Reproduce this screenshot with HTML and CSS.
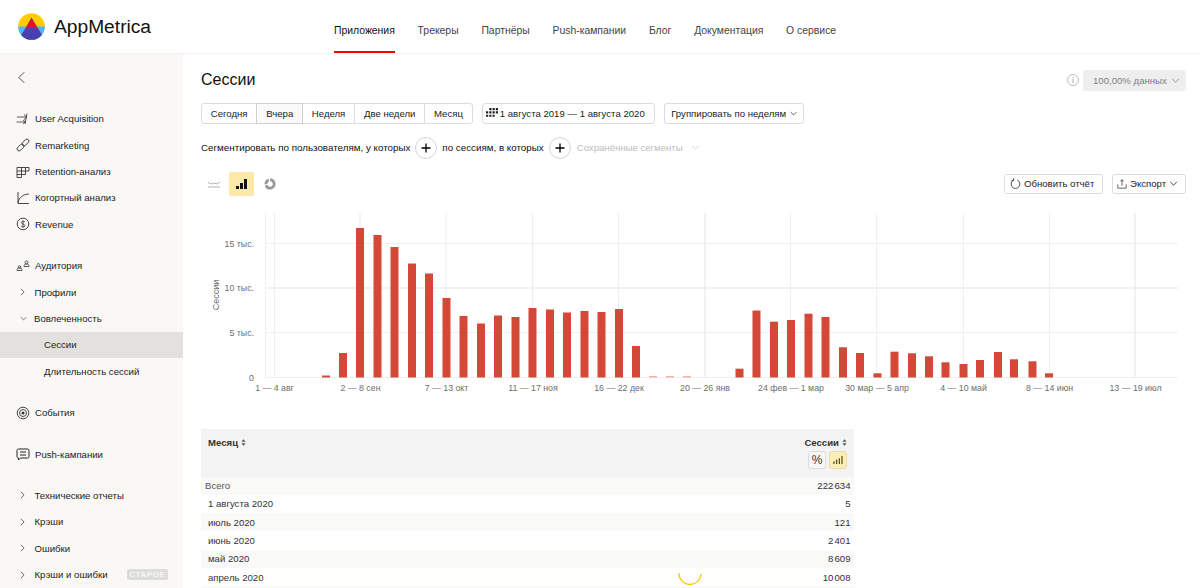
FILE: index.html
```html
<!DOCTYPE html>
<html lang="ru">
<head>
<meta charset="utf-8">
<title>AppMetrica — Сессии</title>
<link rel="stylesheet" href="styles.css">
</head>
<body>
<svg class="defs" width="0" height="0" aria-hidden="true">
  <symbol id="chev-d" viewBox="0 0 10 6"><path d="M1 1l4 4 4-4" fill="none" stroke="currentColor" stroke-width="1"/></symbol>
  <symbol id="chev-r" viewBox="0 0 6 10"><path d="M1 1l4 4-4 4" fill="none" stroke="currentColor" stroke-width="1"/></symbol>
  <symbol id="sort" viewBox="0 0 6 8"><path d="M3 0l2.500 3h-5zM3 8l2.500-3h-5z" fill="currentColor"/></symbol>
  <symbol id="plus" viewBox="0 0 22 22"><circle cx="11" cy="11" r="10.500" fill="#fff" stroke="#d6d6d6"/><path d="M6.500 11h9M11 6.500v9" stroke="#000" stroke-width="1.300" fill="none"/></symbol>
</svg>

<header class="top">
  <a class="brand">
    <svg class="logo" viewBox="0 0 27 27" width="27" height="27">
      <defs><clipPath id="lc"><circle cx="13.500" cy="13.500" r="13.300"/></clipPath></defs>
      <g clip-path="url(#lc)">
        <rect width="27" height="27" fill="#fc0"/>
        <rect y="13.500" width="27" height="14" fill="#4fb5f5"/>
        <path d="M13.500 4.500L27 27H0L7 16z" fill="#4a3fb0"/>
        <path d="M13.500 5L20 16.500Q13.500 12 7 16.500z" fill="#e8112d"/>
      </g>
    </svg>
    <span class="brand-name">AppMetrica</span>
  </a>
  <nav class="nav">
    <a class="nav-item nav-on">Приложения</a>
    <a class="nav-item">Трекеры</a>
    <a class="nav-item">Партнёры</a>
    <a class="nav-item">Push-кампании</a>
    <a class="nav-item">Блог</a>
    <a class="nav-item">Документация</a>
    <a class="nav-item">О сервисе</a>
  </nav>
</header>

<div class="body">
  <aside class="side">
    <svg class="back" viewBox="0 0 8 14" width="7" height="13"><path d="M7 1L1 7l6 6" fill="none" stroke="#333" stroke-width="1"/></svg>

    <ul class="group">
      <li class="item"><svg class="ico" viewBox="0 0 14 14"><path d="M1 5h10M8 2.500L11 5 8 7.500M0.500 10h9M7 8l2.500 2L7 12M11 1.500L9 12" fill="none" stroke="#333" stroke-width=".8"/></svg>User Acquisition</li>
      <li class="item"><svg class="ico" viewBox="0 0 14 14"><g transform="rotate(-45 7 7)" fill="none" stroke="#333" stroke-width=".9"><rect x="-.5" y="5" width="8" height="4" rx="2"/><rect x="6.500" y="5" width="8" height="4" rx="2"/></g></svg>Remarketing</li>
      <li class="item"><svg class="ico" viewBox="0 0 14 14"><path d="M1 2.500h12v3.500H9.500v3.500H5.500V12.500H1zM1 6h8.500M1 9.500h4.500M5.500 2.500V9.500M9.500 2.500V6" fill="none" stroke="#333" stroke-width=".9"/></svg>Retention-анализ</li>
      <li class="item"><svg class="ico" viewBox="0 0 14 14"><path d="M2 1v11.500h11M2 12C3 6 7 3.500 13 3" fill="none" stroke="#333" stroke-width=".9"/></svg>Когортный анализ</li>
      <li class="item"><svg class="ico" viewBox="0 0 14 14"><circle cx="7" cy="7" r="5.800" fill="none" stroke="#333" stroke-width=".9"/><path d="M9 5c-.5-1-3.700-1.200-3.700.5S9 7 9 8.700 5.500 10.200 5 9M7 3.500v7" fill="none" stroke="#333" stroke-width=".8"/></svg>Revenue</li>
    </ul>

    <ul class="group">
      <li class="item"><svg class="ico" viewBox="0 0 14 14"><path d="M1 11.500c0-2 1-2.500 2.500-2.500s2.500.5 2.500 2.500zM8 7.500c0-2 1-2.500 2.500-2.500S13 5.500 13 7.500z" fill="none" stroke="#333" stroke-width=".8"/><circle cx="3.500" cy="8" r="1.300" fill="none" stroke="#333" stroke-width=".8"/><circle cx="10.500" cy="3.500" r="1.500" fill="none" stroke="#333" stroke-width=".8"/></svg>Аудитория</li>
      <li class="item"><svg class="arrow" width="5" height="8"><use href="#chev-r"/></svg>Профили</li>
      <li class="item"><svg class="arrow arrow-d" width="7" height="5"><use href="#chev-d"/></svg>Вовлеченность</li>
      <li class="item sub sub-on">Сессии</li>
      <li class="item sub">Длительность сессий</li>
    </ul>

    <ul class="group group-tight">
      <li class="item"><svg class="ico" viewBox="0 0 14 14"><circle cx="7" cy="7" r="5.800" fill="none" stroke="#333" stroke-width=".9"/><circle cx="7" cy="7" r="3.500" fill="none" stroke="#333" stroke-width=".9"/><circle cx="7" cy="7" r="1.500" fill="#333"/></svg>События</li>
    </ul>

    <ul class="group group-tight">
      <li class="item"><svg class="ico" viewBox="0 0 14 14"><path d="M2.500 2h9a1.500 1.500 0 0 1 1.500 1.500v6a1.500 1.500 0 0 1-1.500 1.500H4.500L2.500 13v-2A1.500 1.500 0 0 1 1 9.500v-6A1.500 1.500 0 0 1 2.500 2zM4 5h6M4 8h6" fill="none" stroke="#222" stroke-width="1"/></svg>Push-кампании</li>
    </ul>

    <ul class="group">
      <li class="item"><svg class="arrow" width="5" height="8"><use href="#chev-r"/></svg>Технические отчеты</li>
      <li class="item"><svg class="arrow" width="5" height="8"><use href="#chev-r"/></svg>Крэши</li>
      <li class="item"><svg class="arrow" width="5" height="8"><use href="#chev-r"/></svg>Ошибки</li>
      <li class="item"><svg class="arrow" width="5" height="8"><use href="#chev-r"/></svg>Крэши и ошибки<span class="old">СТАРОЕ</span></li>
    </ul>
  </aside>

  <main class="main">
    <div class="title-row">
      <h1 class="title">Сессии</h1>
      <div class="sample">
        <svg class="info" viewBox="0 0 12 12" width="12" height="12"><circle cx="6" cy="6" r="5.500" fill="none" stroke="#bbb"/><path d="M6 5v4M6 3v1.200" stroke="#aaa" stroke-width="1"/></svg>
        <span class="sample-btn">100,00% данных<svg class="caret" width="9" height="5"><use href="#chev-d"/></svg></span>
      </div>
    </div>

    <div class="filters">
      <div class="tabs">
        <span class="tab">Сегодня</span><span class="tab tab-on">Вчера</span><span class="tab">Неделя</span><span class="tab">Две недели</span><span class="tab">Месяц</span>
      </div>
      <span class="btn btn-date"><svg class="cal" viewBox="0 0 11 9" width="12" height="10"><path d="M3 0h2v2H3zM6 0h2v2H6zM9 0h2v2H9zM0 3h2v2H0zM3 3h2v2H3zM6 3h2v2H6zM9 3h2v2H9zM0 6h2v2H0zM3 6h2v2H3zM6 6h2v2H6z" fill="#222"/></svg>1 августа 2019 — 1 августа 2020</span>
      <span class="btn btn-group">Группировать по неделям<svg class="caret caret-dark" width="9" height="5"><use href="#chev-d"/></svg></span>
    </div>

    <div class="segments">
      <span class="seg-text">Сегментировать по пользователям, у которых</span>
      <svg class="plus" width="22" height="22"><use href="#plus"/></svg>
      <span class="seg-text">по сессиям, в которых</span>
      <svg class="plus" width="22" height="22"><use href="#plus"/></svg>
      <span class="saved">Сохранённые сегменты<svg class="caret caret-pale" width="9" height="5"><use href="#chev-d"/></svg></span>
    </div>

    <div class="chart-tools">
      <div class="types">
        <span class="type"><svg viewBox="0 0 12 8" width="12" height="8"><path d="M0 2.500l3.500 1.500L6 3l3 1 3-2M0 7h12" fill="none" stroke="#aaa" stroke-width=".9"/></svg></span>
        <span class="type type-on"><svg viewBox="0 0 11 10" width="11" height="10"><path d="M0 7h3v3H0zM4 4h3v6H4zM8 0h3v10H8z" fill="#111"/></svg></span>
        <span class="type"><svg viewBox="0 0 12 12" width="12" height="12"><path d="M6 0.500a5.500 5.500 0 1 1-5.200 7.200l2.700-.9A2.700 2.700 0 1 0 6 3.300z" fill="#999"/><path d="M.6 6.500A5.500 5.500 0 0 1 4.500.7l.6 2.700A2.700 2.700 0 0 0 3.300 6z" fill="#999"/></svg></span>
      </div>
      <div class="actions">
        <span class="btn btn-refresh"><svg class="act-ico" viewBox="0 0 12 12" width="11" height="11"><path d="M4 2.200A4.800 4.800 0 1 0 8 2.200M4 .2v2.500H1.700" fill="none" stroke="#333" stroke-width=".9"/></svg>Обновить отчёт</span>
        <span class="btn btn-export"><svg class="act-ico" viewBox="0 0 12 12" width="10" height="12"><path d="M6 8V1M3.800 3L6 .8 8.200 3M1 6.500V11h10V6.500" fill="none" stroke="#333" stroke-width=".9"/></svg>Экспорт<svg class="caret caret-dark" width="9" height="5"><use href="#chev-d"/></svg></span>
      </div>
    </div>

    <svg class="chart" viewBox="201 205 985 195" width="985" height="195">
      <g class="grid">
        <path d="M265 243.500H1178M265 332.500H1178M265 377.500H1178"/>
        <path class="grid-bold" d="M265 288H1178"/>
        <path d="M265.500 213V378M274.500 213V378M446 213V378M618.500 213V378M790.500 213V378M876.500 213V378M963.500 213V378M1049.500 213V378"/>
        <path class="grid-bold" d="M360 213V378M532.500 213V378M705 213V378M1135 213V378"/>
      </g>
      <g class="bars">
        <rect x="322" y="375.500" width="8" height="2"/>
        <rect x="339" y="353" width="8" height="24.500"/>
        <rect x="356" y="228" width="8" height="149.500"/>
        <rect x="373.500" y="235" width="8" height="142.500"/>
        <rect x="390.500" y="247" width="8" height="130.500"/>
        <rect x="408" y="263.500" width="8" height="114"/>
        <rect x="425" y="273.500" width="8" height="104"/>
        <rect x="442.500" y="298" width="8" height="79.500"/>
        <rect x="459.500" y="316" width="8" height="61.500"/>
        <rect x="477" y="323.500" width="8" height="54"/>
        <rect x="494" y="315.500" width="8" height="62"/>
        <rect x="511.500" y="317" width="8" height="60.500"/>
        <rect x="528.500" y="308" width="8" height="69.500"/>
        <rect x="546" y="309.500" width="8" height="68"/>
        <rect x="563" y="312.500" width="8" height="65"/>
        <rect x="580.500" y="311" width="8" height="66.500"/>
        <rect x="597.500" y="312" width="8" height="65.500"/>
        <rect x="615" y="309" width="8" height="68.500"/>
        <rect x="632" y="346" width="8" height="31.500"/>
        <rect class="bar-pale" x="649" y="376" width="8" height="1.500"/>
        <rect class="bar-pale" x="666" y="376" width="8" height="1.500"/>
        <rect class="bar-pale" x="683" y="376" width="8" height="1.500"/>
        <rect x="735.500" y="368.700" width="8" height="8.800"/>
        <rect x="752.500" y="310.500" width="8" height="67"/>
        <rect x="770" y="321.700" width="8" height="55.800"/>
        <rect x="787" y="320" width="8" height="57.500"/>
        <rect x="804.500" y="313.700" width="8" height="63.800"/>
        <rect x="821.500" y="317" width="8" height="60.500"/>
        <rect x="839" y="347.300" width="8" height="30.200"/>
        <rect x="856" y="353" width="8" height="24.500"/>
        <rect x="873.500" y="373.300" width="8" height="4.200"/>
        <rect x="890.500" y="351.700" width="8" height="25.800"/>
        <rect x="908" y="353.300" width="8" height="24.200"/>
        <rect x="925" y="356.300" width="8" height="21.200"/>
        <rect x="941.500" y="362.300" width="8" height="15.200"/>
        <rect x="959.500" y="364" width="8" height="13.500"/>
        <rect x="976" y="360" width="8" height="17.500"/>
        <rect x="994" y="352" width="8" height="25.500"/>
        <rect x="1010" y="359.300" width="8" height="18.200"/>
        <rect x="1028.500" y="361.300" width="8" height="16.200"/>
        <rect x="1045" y="373.300" width="8" height="4.200"/>
      </g>
      <g class="y-labels">
        <text x="254" y="246.500">15 тыс.</text>
        <text x="254" y="291">10 тыс.</text>
        <text x="254" y="335.500">5 тыс.</text>
        <text x="254" y="381">0</text>
      </g>
      <text class="y-title" transform="translate(219 295) rotate(-90)">Сессии</text>
      <g class="x-labels">
        <text x="274.500" y="390.500">1 — 4 авг</text>
        <text x="360.500" y="390.500">2 — 8 сен</text>
        <text x="446.500" y="390.500">7 — 13 окт</text>
        <text x="533" y="390.500">11 — 17 ноя</text>
        <text x="619" y="390.500">16 — 22 дек</text>
        <text x="705" y="390.500">20 — 26 янв</text>
        <text x="791" y="390.500">24 фев — 1 мар</text>
        <text x="877" y="390.500">30 мар — 5 апр</text>
        <text x="963.500" y="390.500">4 — 10 май</text>
        <text x="1049.500" y="390.500">8 — 14 июн</text>
        <text x="1135.500" y="390.500">13 — 19 июл</text>
      </g>
    </svg>

    <table class="table">
      <thead>
        <tr>
          <th class="th-name">Месяц<svg class="sort" width="5" height="7"><use href="#sort"/></svg></th>
          <th class="th-val">
            <div class="th-label">Сессии<svg class="sort" width="5" height="7"><use href="#sort"/></svg></div>
            <div class="th-btns"><span class="mini">%</span><span class="mini mini-on"><svg viewBox="0 0 11 9" width="10" height="8"><path d="M1 6v3M4 4v5M7 2.500V9M10 0v9" stroke="#4f4310" stroke-width="1.300"/></svg></span></div>
          </th>
        </tr>
      </thead>
      <tbody>
        <tr class="row-total"><td class="total-name">Всего</td><td class="num">222 634</td></tr>
        <tr><td>1 августа 2020</td><td class="num">5</td></tr>
        <tr class="row-alt"><td>июль 2020</td><td class="num">121</td></tr>
        <tr><td>июнь 2020</td><td class="num">2 401</td></tr>
        <tr class="row-alt"><td>май 2020</td><td class="num">8 609</td></tr>
        <tr><td>апрель 2020</td><td class="num">10 008</td></tr>
        <tr class="row-alt"><td></td><td></td></tr>
      </tbody>
    </table>
  </main>
</div>

<svg class="spinner" viewBox="0 0 26 18" width="26" height="18"><path d="M2 2a11 11 0 0 0 22 1" fill="none" stroke="#fc0" stroke-width="1.300"/></svg>
</body>
</html>
```

FILE: styles.css
```css
* { box-sizing: border-box; }
html, body { margin: 0; padding: 0; height: 588px; overflow: hidden; background: #fff; }
body {
  font-family: "Liberation Sans", Arial, sans-serif;
  font-size: 9.600px;
  color: #111;
  position: relative;
}
.defs { position: absolute; }
ul { list-style: none; margin: 0; padding: 0; }

.top {
  height: 54px;
  display: flex;
  border-bottom: 1px solid #f2f2f0;
}
.brand { width: 334px; display: flex; align-items: center; padding: 0 0 1px 18px; }
.logo { display: block; }
.brand-name { font-size: 19.200px; margin: 1.500px 0 0 9px; color: #111; }
.nav { display: flex; gap: 22.800px; }
.nav-item {
  display: flex;
  align-items: center;
  padding-top: 9px;
  font-size: 10.400px;
  color: #444;
  height: 53px;
  border-bottom: 2px solid transparent;
}
.nav-on { color: #111; border-bottom-color: #f00; }

.body { display: flex; height: 534px; }
.side { width: 183px; flex: none; background: #f9f8f5; padding-top: 16.500px; }
.back { display: block; margin-left: 18px; }
.group { margin-top: 15px; }
.group:first-of-type { margin-top: 22.100px; }
.group-tight { margin-top: 15px; }
.item {
  height: 26.400px;
  display: flex;
  align-items: center;
  padding-left: 16px;
  font-size: 9.600px;
  color: #222;
  white-space: nowrap;
}
.ico { width: 14px; height: 14px; flex: none; margin-right: 5px; }
.arrow { flex: none; margin: 0 9.500px 0 4px; color: #444; }
.arrow-d { margin: 0 7.500px 0 3.500px; }
.sub { padding-left: 44px; }
.sub-on { background: #e3e1dd; }
.old {
  margin-left: 19px;
  background: #dcdcd9;
  color: #f7f7f5;
  font-size: 8px;
  font-weight: bold;
  letter-spacing: .5px;
  padding: 1px 3px;
  border-radius: 2px;
}

.main { flex: 1; min-width: 0; padding: 14px 14px 0 18px; }
.title-row { height: 24px; display: flex; justify-content: space-between; align-items: center; }
.title { margin: 0; font-size: 16px; font-weight: normal; color: #111; }
.sample { display: flex; align-items: center; gap: 4px; }
.info { display: block; }
.sample-btn {
  display: flex;
  align-items: center;
  height: 21px;
  width: 103px;
  padding-left: 10px;
  background: #eeeeee;
  border-radius: 3px;
  color: #808080;
}
.caret { margin-left: 4px; color: #888; }
.caret-dark { color: #222; }
.caret-pale { color: #ccc; margin-left: 8px; }

.filters { display: flex; margin-top: 11px; gap: 9px; }
.tabs { display: flex; }
.tab, .btn {
  display: flex;
  align-items: center;
  height: 20.500px;
  background: #fff;
  border: 1px solid #dcdcdc;
  color: #222;
  white-space: nowrap;
}
.tab { padding: 0 8.800px; margin-left: -1px; }
.tab:first-child { margin-left: 0; border-radius: 3px 0 0 3px; }
.tab:last-child { border-radius: 0 3px 3px 0; }
.tab-on { background: #fafafa; border-color: #cfcfcf; position: relative; }
.btn { border-radius: 3px; padding: 0 6px; }
.btn-date { width: 173.500px; padding-left: 3px; }
.btn-group { width: 140px; }
.cal { margin-right: 2px; flex: none; }

.segments { display: flex; align-items: center; height: 22px; margin-top: 13px; color: #111; white-space: nowrap; }
.seg-text { font-size: 9.800px; }
.plus { margin: 0 5px; flex: none; display: block; }
.saved { color: #bdbdbd; display: flex; align-items: center; margin-left: 1px; }

.chart-tools { display: flex; justify-content: space-between; margin-top: 13px; height: 24px; }
.types { display: flex; gap: 3px; }
.type { width: 25px; height: 24px; display: flex; align-items: center; justify-content: center; border-radius: 2px; }
.type-on { background: #fde9a7; }
.actions { display: flex; gap: 9px; padding-top: 2px; }
.btn-refresh { width: 99px; padding: 0 0 0 5px; }
.btn-export { width: 74px; padding: 0 0 0 4px; }
.btn-export .caret { margin-left: 3px; }
.act-ico { margin-right: 3px; flex: none; }

.chart { display: block; margin-top: 9.500px; }
.grid path { stroke: #f0f0f0; stroke-width: 1; fill: none; }
.grid .grid-bold { stroke: #eeeeee; stroke-width: 1.500; }
.bars rect { fill: #d34836; }
.bars .bar-pale { fill: #f2b2aa; }
.y-labels text { font-size: 8.800px; fill: #6e6e6e; text-anchor: end; }
.y-title { font-size: 9px; fill: #6e6e6e; text-anchor: middle; }
.x-labels text { font-size: 8.800px; fill: #6e6e6e; text-anchor: middle; }

.table { width: 653px; margin-top: 29px; border-collapse: collapse; table-layout: fixed; }
.table th { background: #f3f3f3; height: 47.500px; vertical-align: top; padding: 7.500px 7px 0; font-size: 9.600px; color: #333; }
.th-name { text-align: left; }
.th-val { text-align: right; }
.sort { margin-left: 3px; color: #555; }
.th-btns { display: flex; justify-content: flex-end; gap: 3px; margin-top: 3px; }
.mini {
  width: 18px;
  height: 18px;
  display: flex;
  align-items: center;
  justify-content: center;
  border: 1px solid #dcdcdc;
  border-radius: 3px;
  background: #f7f7f7;
  color: #333;
  font-weight: normal;
  font-size: 12px;
}
.mini-on { background: #fdeeb8; border-color: #eadca8; }
.table td { height: 18.300px; padding: 0 7px; color: #333; white-space: nowrap; }
.table .total-name { padding-left: 4px; color: #555; }
.table .num { text-align: right; padding-right: 3.500px; word-spacing: -1.500px; }
.row-total td, .row-alt td { background: #f9f9f7; }

.spinner { position: absolute; left: 677px; top: 571px; }
```
